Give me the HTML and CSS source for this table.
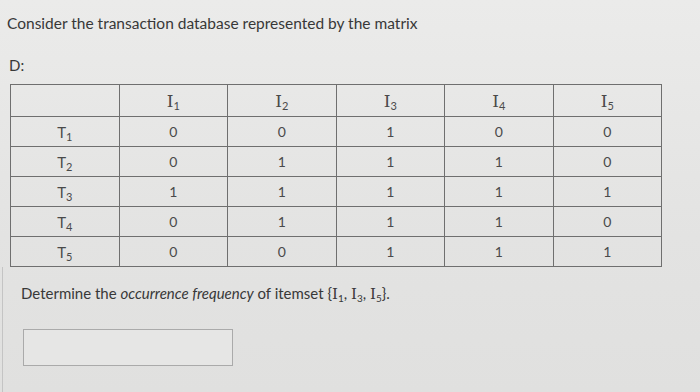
FILE: index.html
```html
<!DOCTYPE html>
<html>
<head>
<meta charset="utf-8">
<link rel="stylesheet" href="styles.css">
</head>
<body>
<div class="page">
  <p class="title">Consider the transaction database represented by the matrix</p>
  <p class="dlabel">D:</p>
  <table class="matrix">
    <tr class="head">
      <th></th>
      <th><span class="mi">I</span><sub>1</sub></th>
      <th><span class="mi">I</span><sub>2</sub></th>
      <th><span class="mi">I</span><sub>3</sub></th>
      <th><span class="mi">I</span><sub>4</sub></th>
      <th><span class="mi">I</span><sub>5</sub></th>
    </tr>
    <tr><td>T<sub>1</sub></td><td>0</td><td>0</td><td>1</td><td>0</td><td>0</td></tr>
    <tr><td>T<sub>2</sub></td><td>0</td><td>1</td><td>1</td><td>1</td><td>0</td></tr>
    <tr><td>T<sub>3</sub></td><td>1</td><td>1</td><td>1</td><td>1</td><td>1</td></tr>
    <tr><td>T<sub>4</sub></td><td>0</td><td>1</td><td>1</td><td>1</td><td>0</td></tr>
    <tr><td>T<sub>5</sub></td><td>0</td><td>0</td><td>1</td><td>1</td><td>1</td></tr>
  </table>
  <div class="lower">
    <p class="question">Determine the <span class="it">occurrence frequency</span> of itemset <span class="set">{<span class="mi">I</span><sub>1</sub>, <span class="mi">I</span><sub>3</sub>, <span class="mi">I</span><sub>5</sub>}</span>.</p>
    <div class="answer"></div>
  </div>
</div>
</body>
</html>
```
FILE: styles.css
```css
html, body {
  margin: 0;
  padding: 0;
  background: #e4e4e3;
}
.page {
  width: 700px;
  height: 392px;
  overflow: hidden;
  font-family: Lato, "Noto Sans", sans-serif;
  color: #383838;
  padding: 0 0 0 7px;
  box-sizing: border-box;
  background: linear-gradient(180deg, #ebebea 0%, #e3e3e2 60%, #e0e0df 100%);
}
.title {
  margin: 0;
  padding-top: 12px;
  font-size: 15.5px;
  line-height: 22px;
}
.dlabel {
  margin: 0;
  padding: 20px 0 0 2px;
  font-size: 15px;
  line-height: 22px;
}
.matrix {
  margin: 8px 0 0 3px;
  border-collapse: collapse;
  width: 652px;
  table-layout: fixed;
  font-size: 14px;
  color: #4a4a4a;
}
.matrix th, .matrix td {
  border: 1.5px solid #6f6f6f;
  text-align: center;
  padding: 0;
  font-weight: normal;
}
.matrix th {
  height: 31px;
  font-size: 17px;
}
.matrix td {
  height: 29px;
}
.matrix td:first-child {
  font-size: 15px;
}
.matrix sub {
  font-size: 11px;
  vertical-align: -3px;
  line-height: 0;
  font-family: Lato, "Noto Sans", sans-serif;
}
.mi {
  font-family: "DejaVu Serif", "Liberation Serif", serif;
}
.lower {
  border-left: 1px solid #c4c4c4;
  margin-left: -5px;
  padding-left: 18px;
  height: 130px;
}
.question {
  margin: 0;
  padding-top: 16px;
  font-size: 15px;
  line-height: 20px;
}
.question sub {
  font-size: 10px;
  vertical-align: -3px;
  line-height: 0;
}
.it {
  font-style: italic;
}
.set .mi {
  font-size: 15px;
}
.answer {
  margin: 25px 0 0 2px;
  width: 208px;
  height: 35px;
  border: 1.5px solid #aaaaaa;
  background: #e6e6e5;
}
```
